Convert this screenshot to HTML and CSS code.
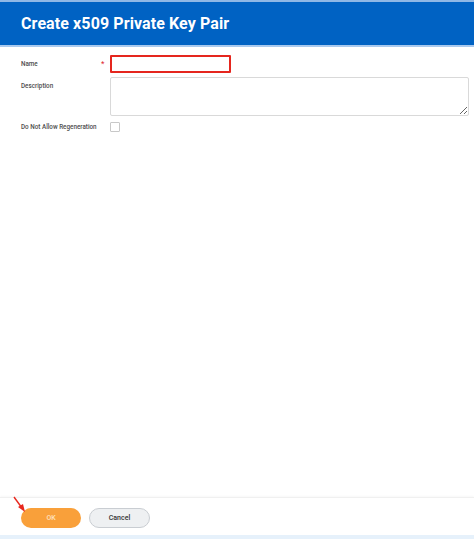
FILE: index.html
```html
<!DOCTYPE html>
<html lang="en">
<head>
    <meta charset="UTF-8">
    <meta name="viewport" content="width=device-width, initial-scale=1.0">
    <title>Create x509 Private Key Pair</title>
    <link rel="stylesheet" href="styles.css">
</head>
<body>
    <div class="page">
        <div class="header">
            <h1>Create x509 Private Key Pair</h1>
        </div>

        <form class="form" id="keyPairForm">
            <div class="row">
                <label class="label" for="name">Name</label>
                <span class="required">*</span>
                <input type="text" id="name" class="input-name">
            </div>
            <div class="row">
                <label class="label" for="description">Description</label>
                <span class="required"></span>
                <textarea id="description" class="input-desc"></textarea>
            </div>
            <div class="row row-check">
                <label class="label" for="noRegen">Do Not Allow Regeneration</label>
                <span class="required"></span>
                <input type="checkbox" id="noRegen" class="check">
            </div>
        </form>

        <div class="footer">
            <div class="buttons">
                <button class="btn btn-ok" type="submit" form="keyPairForm">OK</button>
                <button class="btn btn-cancel" type="button">Cancel</button>
                <svg class="arrow" width="14" height="18" viewBox="0 0 14 18">
                    <line x1="1" y1="1" x2="9" y2="12" stroke="#e8271d" stroke-width="1.4"/>
                    <polygon points="12,16 5,11 10,8" fill="#e8271d"/>
                </svg>
            </div>
        </div>
    </div>
</body>
</html>
```

FILE: styles.css
```css
body {
    margin: 0;
    font-family: "Liberation Sans", Arial, sans-serif;
    background-color: #ffffff;
}
.page {
    width: 474px;
    height: 539px;
    display: flex;
    flex-direction: column;
    border-top: 2px solid #8fb8e6;
    border-bottom: 4px solid #e6f1fb;
    box-sizing: border-box;
}
.header {
    background-color: #0062c3;
    height: 43px;
    border-bottom: 2px solid #a9c9ee;
    display: flex;
    align-items: center;
    padding-left: 21px;
}
.header h1 {
    margin: 0;
    color: #ffffff;
    font-family: Roboto, "Liberation Sans", sans-serif;
    font-size: 16px;
    font-weight: bold;
    letter-spacing: 0.1px;
}
.form {
    flex: 1;
    padding: 8px 5px 0 21px;
    display: flex;
    flex-direction: column;
    gap: 4px;
}
.row {
    display: flex;
    align-items: flex-start;
}
.label {
    width: 80px;
    white-space: nowrap;
    font-family: Roboto, "Liberation Sans", sans-serif;
    font-size: 6.3px;
    font-weight: 500;
    color: #4d4d4d;
    padding-top: 5px;
}
.required {
    width: 9px;
    color: #e0202a;
    font-size: 9px;
    line-height: 10px;
    padding-top: 4px;
}
.input-name {
    width: 121px;
    height: 18px;
    box-sizing: border-box;
    border: 2px solid #e5261e;
    border-radius: 1px;
    margin: 0;
    padding: 0;
}
.input-desc {
    width: 359px;
    height: 39px;
    box-sizing: border-box;
    border: 1px solid #d9d9d9;
    border-radius: 2px;
    margin: 0;
    resize: vertical;
}
.row-check {
    margin-top: 2px;
    align-items: center;
}
.row-check .label {
    padding-top: 0;
}
.row-check .required {
    padding-top: 0;
}
.check {
    appearance: none;
    width: 10px;
    height: 10px;
    margin: 0;
    border: 1px solid #c8c8c8;
    border-radius: 1px;
    background: #ffffff;
}
.footer {
    height: 38px;
    border-top: 1px solid #f0f0f0;
    box-shadow: 0 -1px 2px rgba(0, 0, 0, 0.03);
    padding-left: 21px;
    padding-top: 10px;
    box-sizing: border-box;
}
.buttons {
    display: flex;
    gap: 8px;
    position: relative;
}
.btn {
    height: 20px;
    border-radius: 10px;
    font-family: Roboto, "Liberation Sans", sans-serif;
    font-size: 7px;
    font-weight: 500;
    padding: 0;
}
.btn-ok {
    width: 60px;
    background-color: #f9a03a;
    color: #ffe1bd;
    border: none;
}
.btn-cancel {
    width: 61px;
    background-color: #eef0f2;
    color: #333333;
    border: 1px solid #c9cdd2;
}
.arrow {
    position: absolute;
    left: -8px;
    top: -12px;
}
```
